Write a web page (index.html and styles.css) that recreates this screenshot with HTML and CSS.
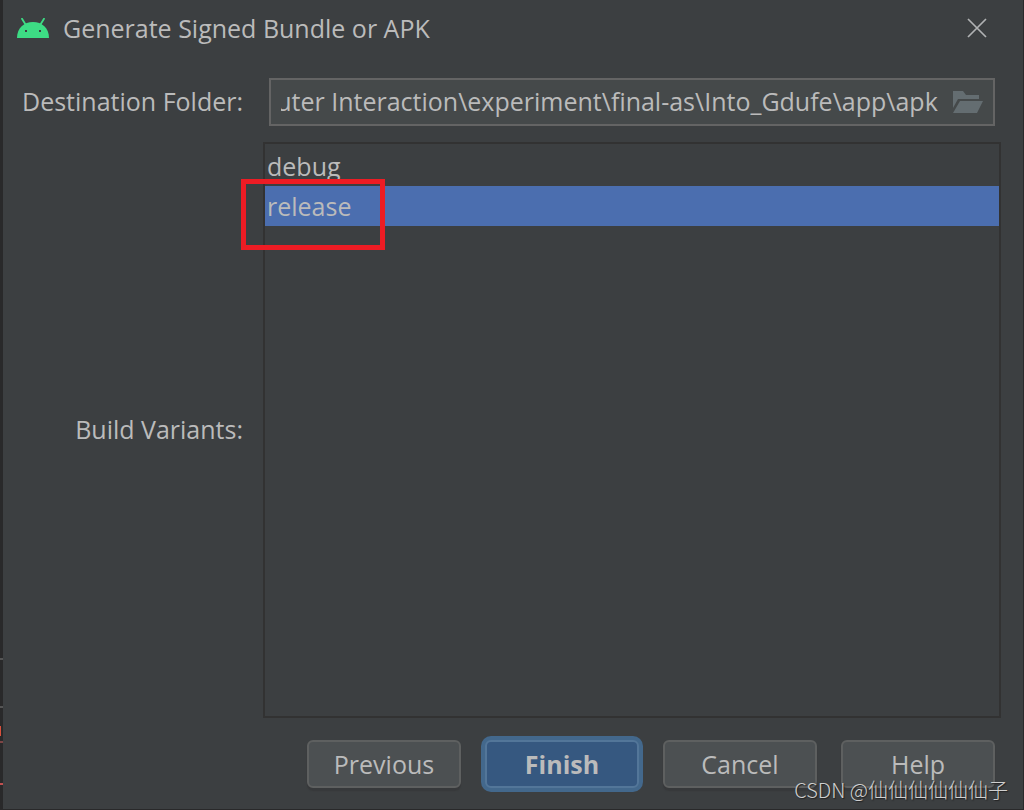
FILE: index.html
```
<!DOCTYPE html>
<html lang="en">
<head>
  <meta charset="UTF-8" />
  <meta name="viewport" content="width=device-width, initial-scale=1.0" />
  <title>Generate Signed Bundle or APK</title>
  <link rel="stylesheet" href="styles.css">
</head>
<body>
  <form class="dialog">
    <header class="titlebar">
      <svg class="logo" viewBox="0 0 32 20" aria-hidden="true">
        <path d="M5 .8l4 6.500M27 .8l-4 6.500" stroke="#3ddc84" stroke-width="1.800" stroke-linecap="round" />
        <path d="M0 20C0 10 7 4 16 4s16 6 16 16z" fill="#3ddc84" />
        <path d="M8 12h2v2H8zM22 12h2v2h-2z" fill="#3c3f41" />
      </svg>
      <h1>Generate Signed Bundle or APK</h1>
      <button type="button" class="close" aria-label="Close">
        <svg viewBox="0 0 20 20" aria-hidden="true">
          <path d="M1 1l18 18M19 1L1 19" stroke="#b0b2b3" stroke-width="1.700" />
        </svg>
      </button>
    </header>

    <div class="fields">
      <label for="folder">Destination Folder:</label>
      <div class="path-field">
        <input type="text" id="folder" value="Computer Interaction\experiment\final-as\Into_Gdufe\app\apk">
        <button type="button" class="browse" aria-label="Browse">
          <svg viewBox="0 0 30 22" aria-hidden="true">
            <path d="M0 0h10l3 4h13v4H5L0 17z" fill="#646d71" />
            <path d="M7 10h23l-6 12H0z" fill="#646d71" />
          </svg>
        </button>
      </div>

      <label for="variants">Build Variants:</label>
      <div class="variants">
        <select id="variants" size="2">
          <option>debug</option>
          <option selected>release</option>
        </select>
        <div class="highlight"></div>
      </div>
    </div>

    <footer class="actions">
      <button type="button">Previous</button>
      <button type="submit" class="primary">Finish</button>
      <button type="button">Cancel</button>
      <button type="button">Help</button>
    </footer>
  </form>
  <div class="watermark">CSDN @仙仙仙仙仙仙子</div>

  <script>
    // keep the end of a long path in view
    const folder = document.getElementById("folder");
    folder.scrollLeft = folder.scrollWidth;
  </script>
</body>
</html>
```

FILE: styles.css
```
* {
  box-sizing: border-box;
}

body {
  margin: 0;
  padding: 0 1px 1px 3px;
  min-height: 100vh;
  display: flex;
  background:
    linear-gradient(#d9503c, #d9503c) 0 726px / 1px 10px no-repeat,
    linear-gradient(#7d4545, #7d4545) 0 741px / 3px 2px no-repeat,
    linear-gradient(#c05050, #c05050) 0 783px / 3px 2px no-repeat,
    linear-gradient(#555, #555) 0 658px / 3px 2px no-repeat,
    linear-gradient(#555, #555) 0 706px / 3px 2px no-repeat,
    #29292a;
  color: #bbb;
  font-family: "Open Sans", "Noto Sans", sans-serif;
  font-size: 25px;
}

button,
input,
select {
  font: inherit;
  color: inherit;
}

.dialog {
  flex: 1;
  min-width: 0;
  display: flex;
  flex-direction: column;
  background: #3c3f41;
}

.titlebar {
  display: flex;
  align-items: center;
  height: 56px;
  padding: 0 36px 0 14px;
}

.titlebar h1 {
  flex: 1;
  margin: 0 0 0 14px;
  font-size: 25px;
  font-weight: 400;
}

.logo {
  width: 32px;
  height: 20px;
  fill: none;
}

.close,
.browse {
  display: flex;
  padding: 0;
  border: 0;
  background: none;
}

.close {
  width: 20px;
  height: 20px;
}

.fields {
  flex: 1;
  display: grid;
  grid-template-columns: 240px 1fr;
  grid-template-rows: 48px 1fr;
  column-gap: 20px;
  row-gap: 16px;
  align-items: center;
  padding: 22px 22px 0 0;
}

.fields label {
  padding-bottom: 2px;
  text-align: right;
  white-space: nowrap;
}

.path-field {
  display: flex;
  align-items: center;
  height: 48px;
  margin: 0 6px;
  padding: 0 10px 0 10px;
  border: 2px solid #646464;
  background: #45494a;
}

.path-field input {
  flex: 1;
  min-width: 0;
  padding: 0 0 2px;
  border: 0;
  background: none;
  outline: none;
}

.browse {
  width: 30px;
  height: 22px;
  margin-left: 15px;
}

.variants {
  position: relative;
  align-self: stretch;
  display: flex;
}

.variants select {
  flex: 1;
  padding: 2px 0 0;
  border: 2px solid #323232;
  border-radius: 0;
  background: #3c3f41;
  outline: none;
}

.variants option {
  height: 40px;
  min-height: 40px;
  padding: 3px 2px 0;
  line-height: 37px;
}

.variants option:checked {
  background: linear-gradient(#4b6eaf, #4b6eaf);
  color: #bbb;
  -webkit-text-fill-color: #bbb;
}

/* red frame over the chosen variant */
.highlight {
  position: absolute;
  left: -22px;
  top: 37px;
  width: 144px;
  height: 71px;
  border: 5px solid #ed1c24;
  pointer-events: none;
}

.actions {
  display: flex;
  justify-content: flex-end;
  gap: 24px;
  padding: 22px 28px 21px;
}

.actions button {
  width: 154px;
  height: 48px;
  padding: 0;
  border: 2px solid #5e6060;
  border-radius: 6px;
  background: #4c5052;
  box-shadow: 0 3px 1px #37393b;
}

.actions .primary {
  border-color: #537699;
  background: #365880;
  box-shadow: 0 0 0 4px #43688c;
  font-weight: 700;
}

.watermark {
  position: absolute;
  right: 16px;
  bottom: 6px;
  color: #d0d0d0;
  font-family: "Noto Sans CJK SC", sans-serif;
  font-size: 20px;
  font-weight: 300;
  line-height: 28px;
  text-shadow: 1px 1px 1px #222;
}
```
